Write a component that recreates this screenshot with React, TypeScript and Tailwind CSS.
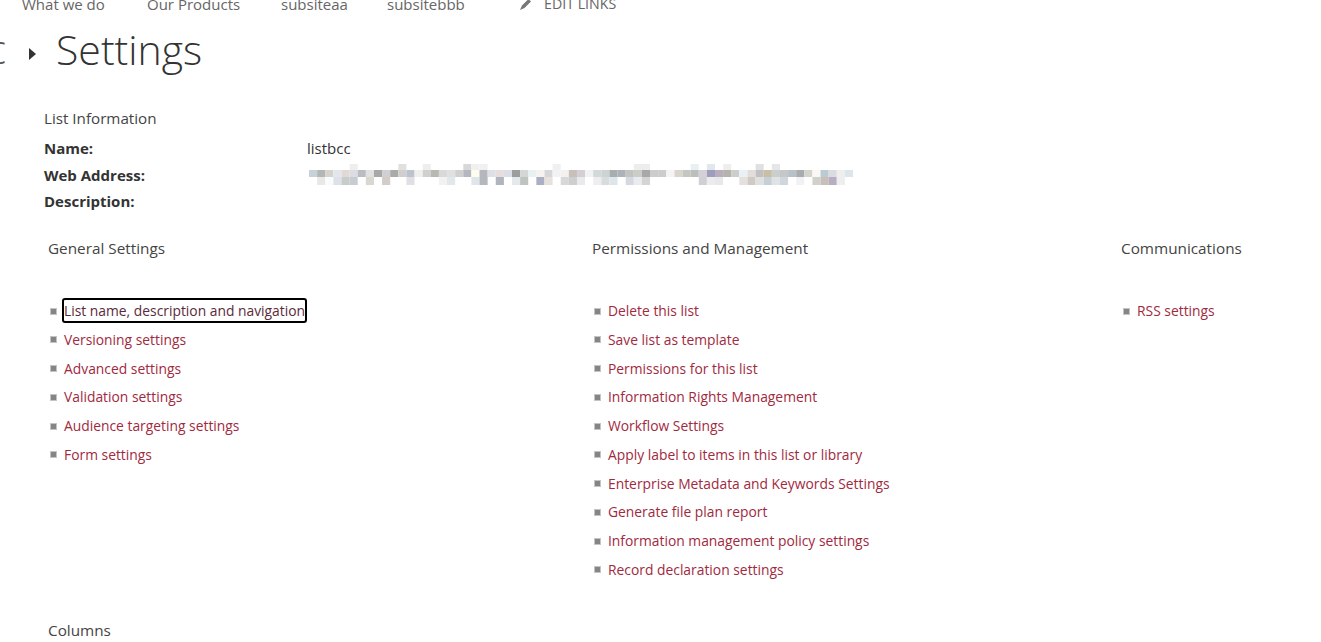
const font = "font-['Open_Sans',sans-serif]"

const midRow = [
  "c5d2da", "b5b5b3", "d5d3cc", "e3e6ea", "e2d9d6", "dcdde4", "b9bcc0", "e0e1e1", "a8a8a8", "cfd0d2", "aaaaa8",
  "cfcfcd", "bcc3ce", "f0efec", "d0d0cc", "b8b8b4", "d9d9d9", "e0e0e0", "d0d0d0", "b4b8be", "fdfdf0", "b4b8bc",
  "dde0e6", "e6dedc", "dcdee6", "9c9e9e", "d4d6d6", "e8f0f2", "f6f2ee", "d6d6da", "f2f2f4", "f4f2f0", "c8c0b8",
  "d4cfd6", "f2f2f2", "d4d8da", "cdd2d4", "a8aeb0", "aeb2b8", "c2c4c0", "cbcdc8", "a8a8a8", "cccccc", "cccccc",
  "f4f4f4", "d8d6cc", "c4c6c2", "bcbebc", "d4d0d8", "9e9ebc", "b8aec0", "b4b4ac", "cccecc", "e8f2f6", "e4dcd8",
  "c0c0c4", "c8c0a4", "cccece", "c4c8c8", "b8c0c8", "a8acae", "d4d4cc", "faf8f2", "bccad2", "dcdcde", "eeeeee",
  "dce6ea",
]

const topRow: Record<number, string> = {
  5: "eeeeec", 11: "e0e0e0", 14: "eeeeee", 19: "d8d8d8", 20: "f0f0f0", 21: "f0f0f0", 30: "f0f0f0",
  40: "ededeb", 41: "ededeb", 47: "e8f0f4", 49: "e0e8ee", 51: "eeeeee", 55: "e0e0e0", 57: "e6e6e6",
}

const bottomRow: Record<number, string> = {
  1: "e8e8e6", 2: "f8fcfd", 3: "dde2e8", 4: "c8cccc", 5: "c8ccd0", 7: "d8d8d0", 9: "d4ccc8", 12: "e0e0e4",
  16: "f2f2f2", 17: "e0e8ea", 20: "dfe6ea", 21: "b4b8bc", 23: "b0b4bc", 25: "e4eaec", 26: "c0c4c0", 28: "aab0c4",
  29: "e8e0dc", 31: "d8d8d8", 32: "ccced0", 33: "e8eaec", 35: "eeeeee", 36: "d8dcdc", 37: "dde6ea", 39: "d4d8e0",
  40: "e8ecf0", 41: "d4d4d4", 48: "d0d0d4", 49: "ececec", 50: "e8e8e8", 53: "e4e0de", 54: "d0cac6", 55: "e0e0e0",
  56: "c4d0d6", 57: "dfe3e6", 58: "d0d6dc", 60: "f0f2f4", 62: "d0d0cc", 63: "c8c0b8", 64: "b8aec4", 65: "eeeeee",
}

const cell = 8.12

// blurred out web address
function BlurredAddress() {
  return (
    <svg width="548" height="21" viewBox="0 0 548 21" className="block">
      {Object.entries(topRow).map(([i, c]) => (
        <rect key={i} x={Number(i) * cell} y={0} width={cell} height={6} fill={`#${c}`} />
      ))}
      {midRow.map((c, i) => (
        <rect key={i} x={i * cell} y={6} width={cell} height={7} fill={`#${c}`} />
      ))}
      {Object.entries(bottomRow).map(([i, c]) => (
        <rect key={i} x={Number(i) * cell} y={13} width={cell} height={8} fill={`#${c}`} />
      ))}
    </svg>
  )
}

function SettingsColumn({ title, links, className }: { title: string; links: string[]; className: string }) {
  return (
    <div className={className}>
      <h3 className="h-[20px] text-[15.3px] leading-[20px] font-normal text-[#444444]">{title}</h3>
      <ul className="mt-[39.3px]">
        {links.map((link, i) => (
          <li key={link} className="flex h-[28.75px] items-center">
            <span className="ml-[2px] h-[7px] w-[7px] shrink-0 border border-[#c4c4c4] bg-[#858585]" />
            <a
              className={
                title === "General Settings" && i === 0
                  ? "ml-[5px] -mt-[2px] rounded-[3px] border-2 border-black text-[13.85px] leading-[21px] text-[#5a2a3a]"
                  : "ml-[7px] text-[13.85px] leading-[20px] text-[#9f2a3e]"
              }
            >
              {link}
            </a>
          </li>
        ))}
      </ul>
    </div>
  )
}

export default function App() {
  return (
    <div className={`${font} h-[642px] w-[1321px] overflow-hidden bg-white text-[#444444]`}>
      {/* top nav, cut off by the scroll position */}
      <nav className="-mt-[6px] flex h-[20px] items-center pl-[22px] text-[15px] leading-[20px] text-[#666666]">
        <span className="w-[125px]">What we do</span>
        <span className="w-[134px]">Our Products</span>
        <span className="w-[106px]">subsiteaa</span>
        <span className="w-[132px]">subsitebbb</span>
        <svg width="14" height="14" viewBox="0 0 14 14" className="mr-[11px]">
          <path d="M1 13 L3 8.5 L9.5 2 L12 4.5 L5.5 11 Z" fill="#777777" />
        </svg>
        <span className="text-[14.2px]">EDIT LINKS</span>
      </nav>

      <div className="mt-[10px] flex h-[50px] items-center">
        <span className="-ml-[13px] w-[42px] text-[40px] leading-[50px] font-light text-[#555555]">c</span>
        <span className="mt-[10px] h-0 w-0 border-y-[6px] border-l-[7px] border-y-transparent border-l-[#333333]" />
        <h1 className="ml-[20px] text-[41px] leading-[50px] font-light text-[#333333]">Settings</h1>
      </div>

      <div className="mt-[34px] pl-[44px]">
        <h3 className="text-[15.2px] leading-[20px] text-[#444444]">List Information</h3>
        <dl className="mt-[7px] text-[15px] text-[#333333]">
          <div className="flex h-[26.5px] items-center">
            <dt className="w-[263px] font-bold">Name:</dt>
            <dd>listbcc</dd>
          </div>
          <div className="flex h-[26.5px] items-center">
            <dt className="w-[265px] font-bold">Web Address:</dt>
            <dd>
              <BlurredAddress />
            </dd>
          </div>
          <div className="flex h-[26.5px] items-center">
            <dt className="font-bold">Description:</dt>
          </div>
        </dl>
      </div>

      <div className="mt-[23px] flex pl-[48px]">
        <SettingsColumn
          className="w-[544px]"
          title="General Settings"
          links={[
            "List name, description and navigation",
            "Versioning settings",
            "Advanced settings",
            "Validation settings",
            "Audience targeting settings",
            "Form settings",
          ]}
        />
        <SettingsColumn
          className="w-[529px]"
          title="Permissions and Management"
          links={[
            "Delete this list",
            "Save list as template",
            "Permissions for this list",
            "Information Rights Management",
            "Workflow Settings",
            "Apply label to items in this list or library",
            "Enterprise Metadata and Keywords Settings",
            "Generate file plan report",
            "Information management policy settings",
            "Record declaration settings",
          ]}
        />
        <SettingsColumn className="w-[200px]" title="Communications" links={["RSS settings"]} />
      </div>

      <h3 className="mt-[35.7px] pl-[48px] text-[15.3px] leading-[20px] text-[#444444]">Columns</h3>
    </div>
  )
}
